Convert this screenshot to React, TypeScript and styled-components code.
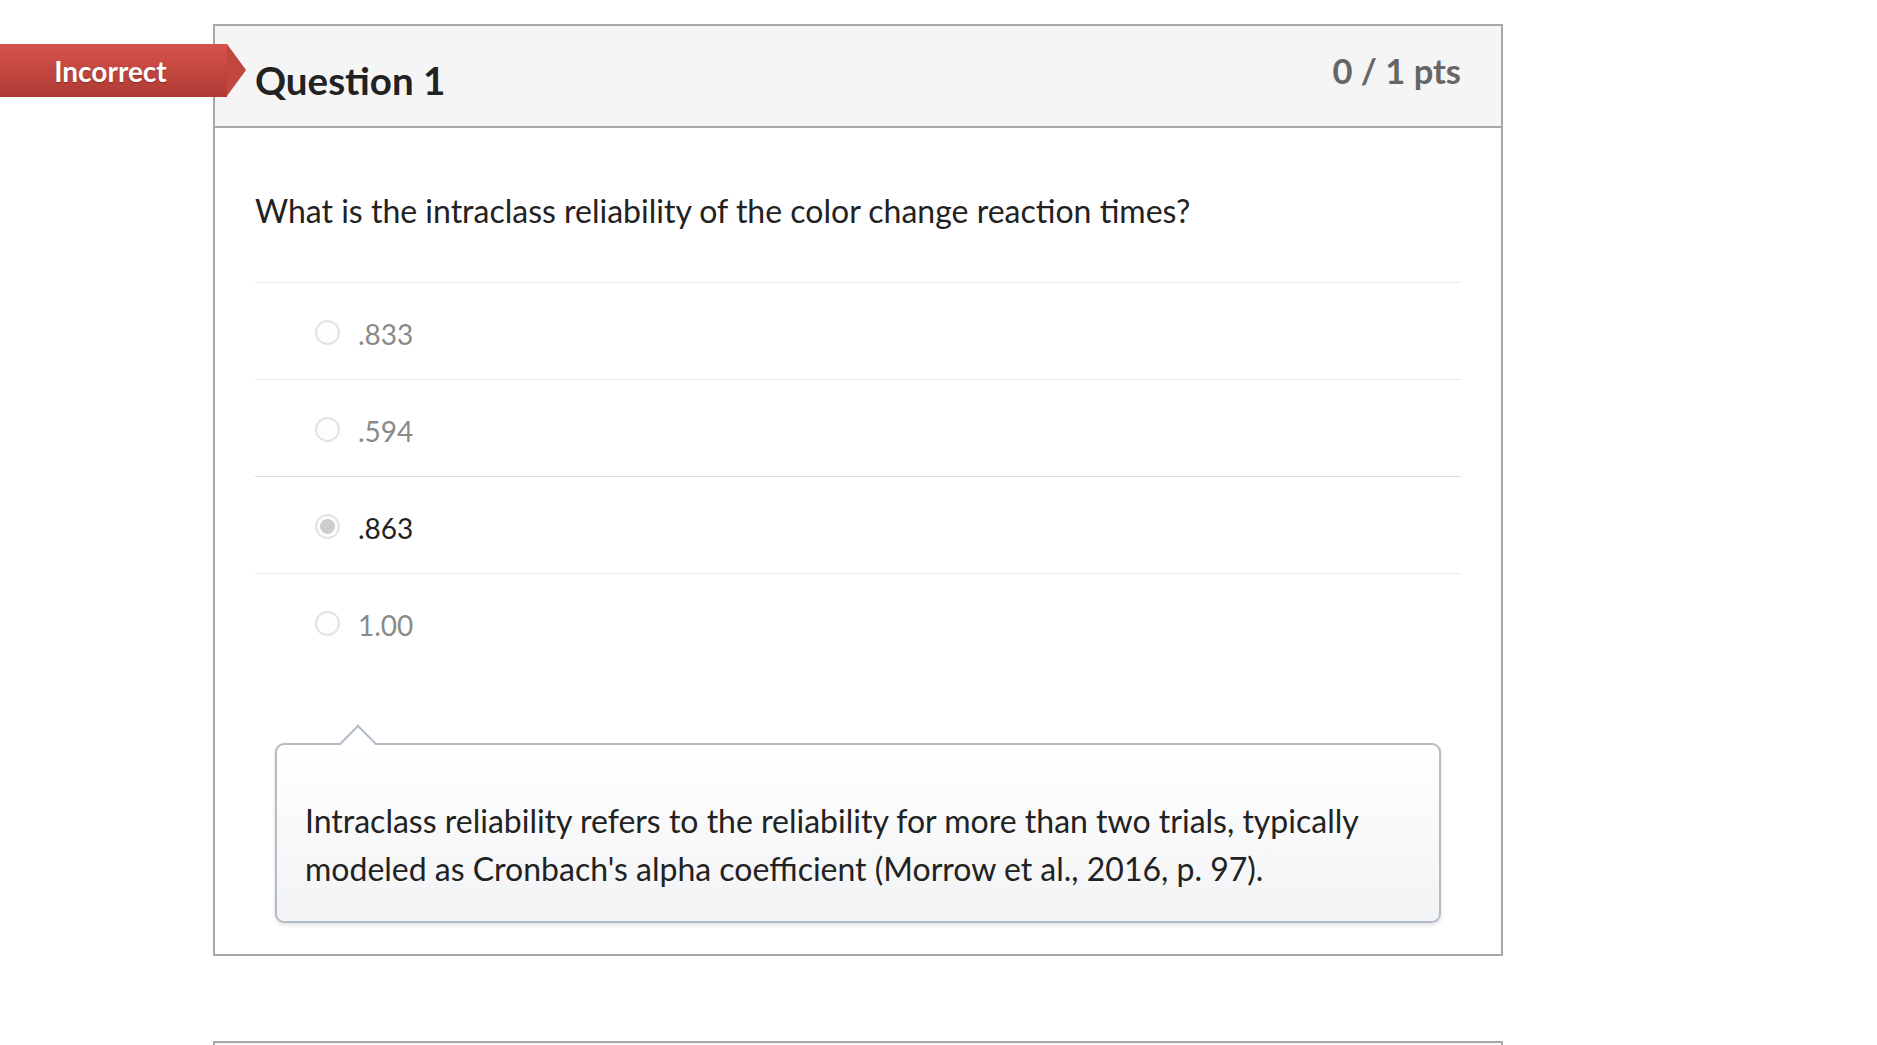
import React from 'react';
import styled, { createGlobalStyle } from 'styled-components';

const GlobalStyle = createGlobalStyle`
    html, body {
        margin: 0;
        padding: 0;
        background: #fff;
        font-family: Lato, "Open Sans", sans-serif;
        color: #2d2d2d;
    }
`;

const Page = styled.div`
    position: relative;
    padding: 24px 0 0 213px;
    width: 1290px;
`;

const QuestionCard = styled.div`
    position: relative;
    border: 2px solid #a7a7a7;
    background: #fff;
    margin-bottom: 85px;
`;

const Header = styled.div`
    display: flex;
    justify-content: space-between;
    align-items: flex-start;
    height: 102px;
    box-sizing: border-box;
    padding: 0 40px;
    background: #f5f5f5;
    border-bottom: 2px solid #a7a7a7;
`;

const Title = styled.h2`
    margin: 0;
    padding-top: 32px;
    font-size: 38.5px;
    line-height: 44px;
    font-weight: 700;
    color: #222;
`;

const Points = styled.div`
    padding-top: 25px;
    font-size: 34.5px;
    line-height: 40px;
    font-weight: 700;
    color: #666;
`;

const ResultBadge = styled.div`
    position: absolute;
    left: -215px;
    top: 18px;
    width: 227px;
    height: 53px;
    display: flex;
    align-items: center;
    justify-content: center;
    padding-right: 6px;
    box-sizing: border-box;
    background: linear-gradient(#d6534c, #ad3a33);
    color: #fff;
    font-size: 28px;
    font-weight: 700;
    text-shadow: 0 1px 1px rgba(0, 0, 0, 0.3);

    &::after {
        content: '';
        position: absolute;
        right: -19px;
        top: 0;
        border-style: solid;
        border-width: 26.5px 0 26.5px 19px;
        border-color: transparent transparent transparent #c1463f;
    }
`;

const Body = styled.div`
    padding: 62px 40px 31px;
`;

const QuestionText = styled.p`
    margin: 0 0 50px;
    font-size: 32px;
    line-height: 42px;
    color: #222;
`;

const AnswerList = styled.div`
    display: flex;
    flex-direction: column;
`;

const AnswerRow = styled.label<{ $strong?: boolean }>`
    display: flex;
    align-items: center;
    height: 97px;
    box-sizing: border-box;
    padding: 6px 0 0 60px;
    border-top: 1px solid ${(p) => (p.$strong ? '#dcdcdc' : '#ebebeb')};
`;

const Radio = styled.span<{ $checked?: boolean }>`
    width: 25px;
    height: 25px;
    box-sizing: border-box;
    border-radius: 50%;
    border: 2px solid #e2e2e2;
    background: #fdfdfd;
    display: flex;
    align-items: center;
    justify-content: center;
    margin-right: 18px;
    margin-top: -3px;

    &::after {
        content: '';
        display: ${(p) => (p.$checked ? 'block' : 'none')};
        width: 15px;
        height: 15px;
        border-radius: 50%;
        background: #cdcdcd;
    }
`;

const AnswerText = styled.span<{ $selected?: boolean }>`
    font-size: 28px;
    line-height: 40px;
    color: ${(p) => (p.$selected ? '#222' : '#8a8a8a')};
`;

const Feedback = styled.div`
    position: relative;
    margin: 73px 20px 0;
    padding: 52px 28px 28px;
    border: 2px solid #b3bcc5;
    border-radius: 9px;
    background: linear-gradient(#ffffff, #f2f3f5);
    box-shadow: 0 2px 4px rgba(0, 0, 0, 0.12);
    font-size: 32px;
    line-height: 48px;
    color: #222;

    &::before {
        content: '';
        position: absolute;
        left: 68px;
        top: -15px;
        width: 26px;
        height: 26px;
        box-sizing: border-box;
        background: #fff;
        border-top: 2px solid #b3bcc5;
        border-left: 2px solid #b3bcc5;
        transform: rotate(45deg);
    }
`;

const NextCard = styled.div`
    height: 40px;
    border: 2px solid #a7a7a7;
    border-bottom: none;
    background: #f5f5f5;
`;

const answers = [
    { text: '.833', selected: false },
    { text: '.594', selected: false },
    { text: '.863', selected: true },
    { text: '1.00', selected: false },
];

const App = () => {
    return (
        <>
            <GlobalStyle />
            <Page>
                <QuestionCard>
                    <ResultBadge>Incorrect</ResultBadge>
                    <Header>
                        <Title>Question 1</Title>
                        <Points>0 / 1 pts</Points>
                    </Header>
                    <Body>
                        <QuestionText>
                            What is the intraclass reliability of the color change reaction times?
                        </QuestionText>
                        <AnswerList>
                            {answers.map((a, i) => (
                                <AnswerRow key={a.text} $strong={i === 2}>
                                    <Radio $checked={a.selected} />
                                    <AnswerText $selected={a.selected}>{a.text}</AnswerText>
                                </AnswerRow>
                            ))}
                        </AnswerList>
                        <Feedback>
                            Intraclass reliability refers to the reliability for more than two trials, typically
                            modeled as Cronbach's alpha coefficient (Morrow et al., 2016, p. 97).
                        </Feedback>
                    </Body>
                </QuestionCard>
                <NextCard />
            </Page>
        </>
    );
};

export default App;
